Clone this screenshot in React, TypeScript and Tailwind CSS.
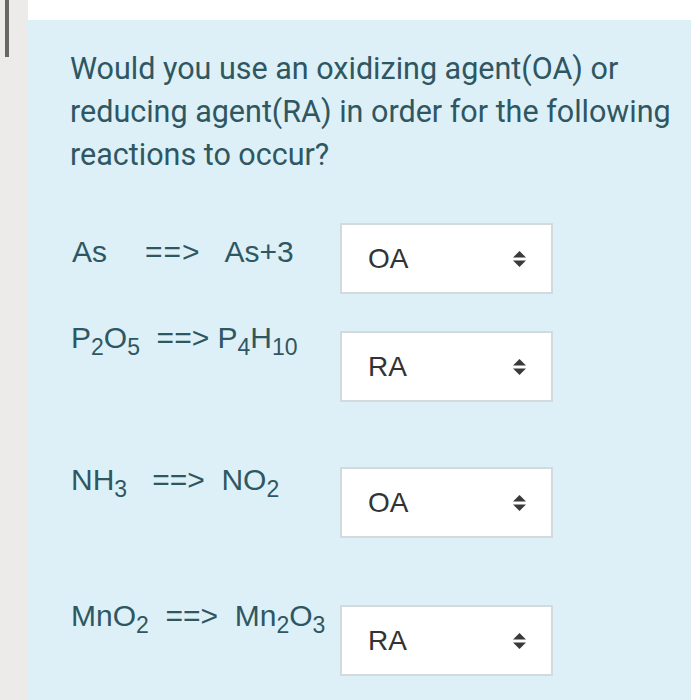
import React from "react";

const Arrows = () => (
  <svg width="15" height="18" viewBox="0 0 15 18" className="block">
    <polygon points="7.5,1 14,7.5 1,7.5" fill="#3a3a3a" />
    <polygon points="1,10.5 14,10.5 7.5,17" fill="#3a3a3a" />
  </svg>
);

const Select = ({ value }: { value: string }) => (
  <div
    className="w-[213px] h-[71px] bg-white border-2 border-[#d3dadd] flex items-center justify-between pl-[26px] pr-[24px] text-[28px] text-[#333]"
    style={{ fontFamily: '"Liberation Sans", Arial, sans-serif' }}
  >
    <span>{value}</span>
    <Arrows />
  </div>
);

const Sub = ({ children }: { children: React.ReactNode }) => (
  <span className="text-[23px]" style={{ verticalAlign: "-0.3em" }}>
    {children}
  </span>
);

export default function App() {
  return (
    <div className="w-[693px] h-[700px] flex bg-white overflow-hidden">
      <div className="w-[28px] h-full bg-[#ecebe9] shrink-0 pl-[5px]">
        <div className="w-[4px] h-[57px] bg-[#666]" />
      </div>
      <div className="flex-1 flex flex-col">
        <div className="h-[20px] bg-white shrink-0" />
        <div className="flex-1 bg-[#ddf0f7] mr-[2px] pl-[42px] text-[#2f5762]">
          <p
            className="text-[30.5px] leading-[43px] pt-[27px] w-[615px]"
            style={{ fontFamily: "Roboto, sans-serif" }}
          >
            Would you use an oxidizing agent(OA) or reducing agent(RA) in order for the following reactions to occur?
          </p>
          <div
            className="text-[30px] leading-none"
            style={{ fontFamily: '"Liberation Sans", Arial, sans-serif' }}
          >
            <div className="flex items-start mt-[47px]">
              <div className="w-[270px] pt-[14px] pl-[2px] whitespace-pre">
                <span>As</span>
                <span className="ml-[38px] tracking-[1px]">==&gt;</span>
                <span className="ml-[24px]">As+3</span>
              </div>
              <Select value="OA" />
            </div>
            <div className="flex items-start mt-[37px]">
              <div className="w-[270px] -mt-[8px] pl-[1px] whitespace-pre">
                P<Sub>2</Sub>O<Sub>5</Sub>{"  ==> "}P<Sub>4</Sub>H<Sub>10</Sub>
              </div>
              <Select value="RA" />
            </div>
            <div className="flex items-start mt-[65px]">
              <div className="w-[270px] -mt-[2px] pl-[1px] whitespace-pre">
                NH<Sub>3</Sub>{"   ==>  "}NO<Sub>2</Sub>
              </div>
              <Select value="OA" />
            </div>
            <div className="flex items-start mt-[67px]">
              <div className="w-[270px] -mt-[4px] pl-[1px] whitespace-pre">
                MnO<Sub>2</Sub>{"  ==>  "}Mn<Sub>2</Sub>O<Sub>3</Sub>
              </div>
              <Select value="RA" />
            </div>
          </div>
        </div>
      </div>
    </div>
  );
}
